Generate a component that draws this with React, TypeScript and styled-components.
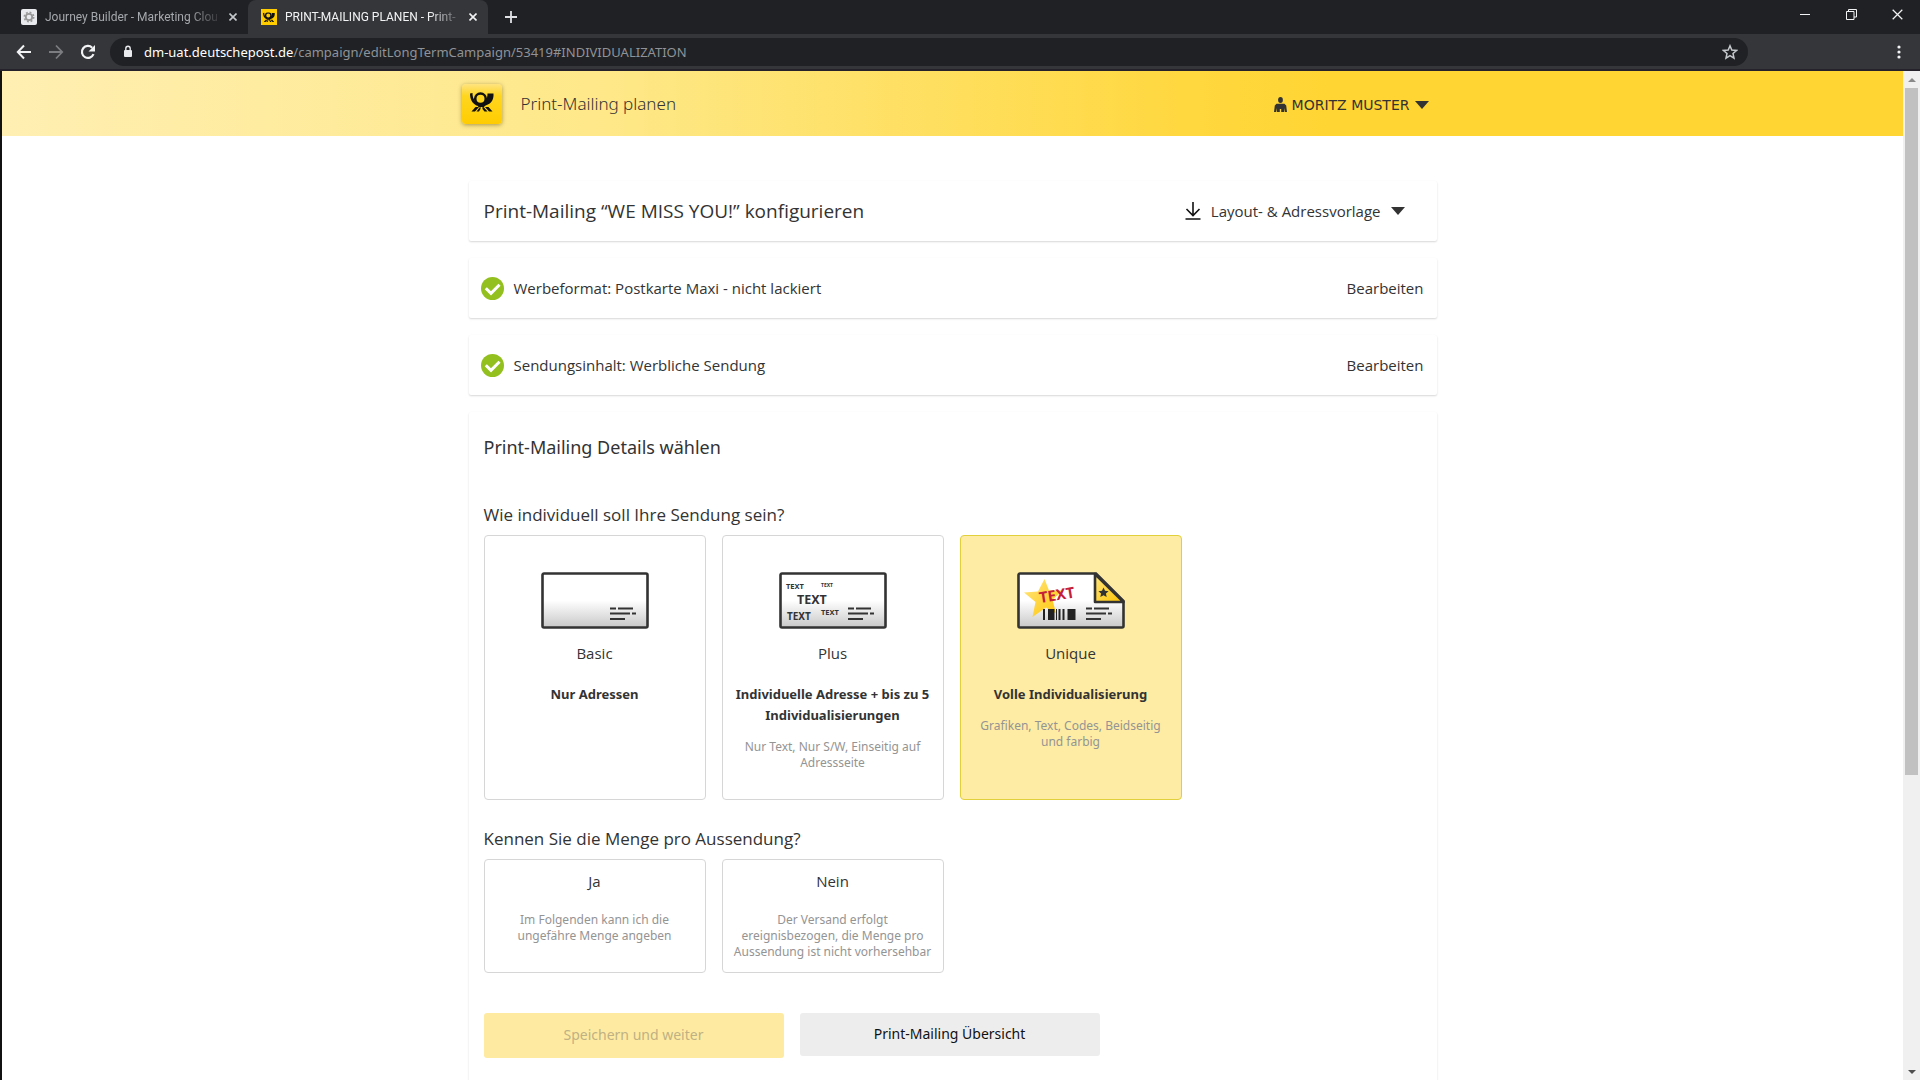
import React, { useState } from "react";
import styled, { createGlobalStyle } from "styled-components";

const sans = '"Open Sans", "Noto Sans", sans-serif';
const noto = '"Noto Sans", "Open Sans", sans-serif';
const ink = "#333333";

const GlobalStyle = createGlobalStyle`
  *, *::before, *::after { box-sizing: border-box; }
  body { margin: 0; background: #fff; color: ${ink}; font-family: ${sans}; }
  button { font-family: inherit; cursor: pointer; }
  h1, h2, h3, p { margin: 0; font-weight: 400; }
`;

const Window = styled.div`
  display: flex;
  flex-direction: column;
  height: 100vh;
  overflow: hidden;
`;

/* ---------- browser frame ---------- */

const TabStrip = styled.div`
  display: flex;
  align-items: stretch;
  height: 34px;
  flex: none;
  background: #202124;
  padding-left: 8px;
`;

const Tab = styled.div<{ $active?: boolean }>`
  display: flex;
  align-items: center;
  width: 240px;
  padding: 0 7px 0 13px;
  gap: 8px;
  border-radius: 8px 8px 0 0;
  background: ${(p) => (p.$active ? "#35363a" : "transparent")};
  color: ${(p) => (p.$active ? "#f1f3f4" : "#a5a8ad")};
  font-family: Roboto, sans-serif;
  font-size: 12px;
  line-height: 16px;
`;

const TabTitle = styled.span`
  flex: 1;
  min-width: 0;
  white-space: nowrap;
  mask-image: linear-gradient(90deg, #000 calc(100% - 28px), rgba(0, 0, 0, 0.2));
`;

const IconButton = styled.button<{ $size?: number; $color?: string }>`
  display: flex;
  align-items: center;
  justify-content: center;
  flex: none;
  width: ${(p) => p.$size ?? 16}px;
  height: ${(p) => p.$size ?? 16}px;
  padding: 0;
  border: 0;
  background: none;
  color: ${(p) => p.$color ?? "#f1f3f4"};
`;

const NewTab = styled(IconButton)`
  align-self: center;
  margin-left: 15px;
`;

const WindowControls = styled.div`
  display: flex;
  margin-left: auto;
  padding-right: 7px;
  gap: 14px;
  height: 28px;
  align-items: center;
`;

const Toolbar = styled.div`
  display: flex;
  align-items: center;
  height: 37px;
  flex: none;
  padding: 0 5px 0 8px;
  background: #35363a;
  border-bottom: 2px solid #26222b;
`;

const NavButtons = styled.div`
  display: flex;
`;

const AddressBar = styled.div`
  display: flex;
  align-items: center;
  flex: 1;
  height: 28px;
  margin: 0 135px 0 6px;
  padding: 0 10px 0 12px;
  gap: 10px;
  border-radius: 14px;
  background: #202124;
  color: #8f9398;
`;

const Url = styled.span`
  flex: 1;
  font-family: ${noto};
  font-size: 13px;
  line-height: 20px;
  white-space: nowrap;
  b { font-weight: 400; color: #fff; }
`;

const Viewport = styled.div`
  display: flex;
  flex: 1;
  min-height: 0;
  border-left: 2px solid #111;
`;

const Page = styled.div`
  flex: 1;
  min-width: 0;
  overflow: hidden;
`;

const ScrollTrack = styled.div`
  display: flex;
  flex-direction: column;
  align-items: center;
  flex: none;
  width: 17px;
  background: #f0f0f0;
`;

const ScrollArrow = styled.div`
  display: flex;
  align-items: center;
  justify-content: center;
  height: 17px;
  flex: none;
`;

const ScrollSpace = styled.div`
  flex: 1;
  align-self: stretch;
  padding: 0 2px;
`;

const ScrollThumb = styled.div`
  height: 70.5%;
  background: #c1c1c1;
`;

/* ---------- page ---------- */

const Header = styled.header`
  height: 65px;
  background: linear-gradient(90deg, #ffefb2 0%, #fee888 32%, #ffd840 62%, #ffd533 70%, #ffd533 100%);
`;

const HeaderInner = styled.div`
  display: flex;
  align-items: center;
  max-width: 982px;
  height: 100%;
  margin: 0 auto;
  padding-right: 15px;
`;

const Logo = styled.a`
  display: flex;
  align-items: center;
  justify-content: center;
  width: 40px;
  height: 40px;
  padding-bottom: 4px;
  border-radius: 4px;
  background: linear-gradient(180deg, #ffe380 0%, #ffd61f 30%, #ffcc00 100%);
  box-shadow: 0 1px 4px rgba(90, 70, 0, 0.5);
`;

const AppName = styled.span`
  margin-left: 19px;
  font-family: ${noto};
  font-size: 17px;
  line-height: 24px;
  font-weight: 300;
`;

const UserMenu = styled.button`
  display: flex;
  align-items: center;
  gap: 5px;
  margin-left: auto;
  padding: 3px 0 0;
  border: 0;
  background: none;
  color: ${ink};
  font: 14px/20px "DejaVu Sans", sans-serif;
`;

const Content = styled.main`
  display: flex;
  flex-direction: column;
  gap: 17px;
  max-width: 968px;
  margin: 0 auto;
  padding-top: 45px;
`;

const Panel = styled.section`
  border-radius: 2px;
  background: #fff;
  box-shadow: 0 1px 2px rgba(0, 0, 0, 0.16);
`;

const BarPanel = styled(Panel)<{ $inset?: boolean }>`
  display: flex;
  align-items: center;
  justify-content: space-between;
  height: 60px;
  padding: 0 ${(p) => (p.$inset ? 32 : 13)}px 0 ${(p) => (p.$inset ? 15 : 12)}px;
`;

const Title = styled.h1`
  font-size: 19px;
  line-height: 28px;
`;

const TextButton = styled.button`
  display: flex;
  align-items: center;
  gap: 10px;
  padding: 0;
  border: 0;
  background: none;
  color: ${ink};
  font-size: 15px;
  line-height: 20px;
`;

const Step = styled.h2`
  display: flex;
  align-items: center;
  gap: 10px;
  font-size: 15px;
  line-height: 20px;
`;

const DetailPanel = styled(Panel)`
  padding: 23px 15px 40px;
`;

const SectionTitle = styled.h2`
  font-family: ${noto};
  font-size: 18px;
  line-height: 24px;
`;

const Group = styled.fieldset<{ $gap: number }>`
  min-width: 0;
  margin: ${(p) => p.$gap}px 0 0;
  padding: 0;
  border: 0;
`;

const Legend = styled.legend`
  padding: 0 0 8px;
  font-size: 17px;
  line-height: 24px;
`;

const Options = styled.div`
  display: flex;
  gap: 16px;
`;

const OptionCard = styled.label<{ $selected: boolean; $tall?: boolean }>`
  position: relative;
  display: flex;
  flex-direction: column;
  align-items: center;
  flex: 0 1 222px;
  min-height: ${(p) => (p.$tall ? 265 : 114)}px;
  padding: ${(p) => (p.$tall ? 36 : 10)}px 8px 8px;
  border: 1px solid ${(p) => (p.$selected ? "#e2cf3c" : "#d6d6d6")};
  border-radius: 4px;
  background: ${(p) => (p.$selected ? "#feeca4" : "#fff")};
  text-align: center;
  cursor: pointer;
`;

const Radio = styled.input`
  position: absolute;
  inset: 0;
  margin: 0;
  opacity: 0;
  cursor: pointer;
`;

const OptionName = styled.span<{ $tall?: boolean }>`
  margin-top: ${(p) => (p.$tall ? 13 : 0)}px;
  font-size: 15px;
  line-height: 22px;
`;

const OptionLead = styled.strong`
  margin-top: 20px;
  font-family: ${noto};
  font-size: 13px;
  line-height: 21px;
  font-weight: 700;
`;

const OptionHint = styled.span<{ $gap: number }>`
  margin-top: ${(p) => p.$gap}px;
  color: #949494;
  font-family: ${noto};
  font-size: 12px;
  line-height: 16px;
`;

const Actions = styled.div`
  display: flex;
  align-items: flex-start;
  gap: 16px;
  margin-top: 40px;
`;

const ActionButton = styled.button<{ $primary?: boolean }>`
  flex: 0 1 300px;
  height: ${(p) => (p.$primary ? 45 : 43)}px;
  padding: 0 8px 1px;
  border: 0;
  border-radius: 3px;
  background: ${(p) => (p.$primary ? "#feeba1" : "#ededed")};
  color: ${(p) => (p.$primary ? "#bfb184" : "#111")};
  font-family: ${noto};
  font-size: 14px;
  line-height: 20px;
`;

/* ---------- drawings ---------- */

const Horn = ({ size }: { size: number }) => (
  <svg width={size} height={(size * 20) / 24} viewBox="0 0 24 20" aria-hidden="true">
    <circle cx="10.500" cy="6.800" r="5.300" fill="none" stroke="#111" strokeWidth="2.600" />
    <path d="M0 1.500 L2.500 1 C2.500 5.500 4 9 8.500 12 L7.500 14 C2 11.500 0 7 0 1.500Z" fill="#111" />
    <path d="M17.500 1.500 L23.500 1.500 C24 8.500 20.500 13 13 14 L10 12.500 C15.500 11 17.500 7 17.500 1.500Z" fill="#111" />
    <path d="M5.500 15 H9 L5 19.500 H1.500Z M10 15 L10.500 15 L10.500 17 L9 19.500 H6.500Z M15 15 H18.500 L22.500 19.500 H19Z M12.500 15 L13.500 15 L17.500 19.500 H14.500 L12.500 17Z M7 12.500 L16 12.500 L14 15 L8.500 15Z" fill="#111" />
  </svg>
);

const Cross = ({ size = 8, width = 1.6 }: { size?: number; width?: number }) => (
  <svg width={size} height={size} viewBox="0 0 8 8" stroke="currentColor" strokeWidth={width} aria-hidden="true">
    <path d="M.5.5l7 7M7.5.5l-7 7" />
  </svg>
);

const Caret = ({ width = 14 }: { width?: number }) => (
  <svg width={width} height="8" viewBox="0 0 14 8" fill="currentColor" aria-hidden="true">
    <path d="M0 0h14L7 8z" />
  </svg>
);

const Check = () => (
  <svg width="23" height="23" viewBox="0 0 23 23" aria-hidden="true">
    <circle cx="11.500" cy="11.500" r="11.500" fill="#93c01f" />
    <path d="M4.800 11.200l5.200 5.200 8.500-8.600" fill="none" stroke="#fff" strokeWidth="3" />
  </svg>
);

const AddressLines = () => (
  <path d="M69 36.500h6M77 36.500h15M69 41.500h20M91 41.500h4M69 47h15" stroke="#333" strokeWidth="2" />
);

type Kind = "basic" | "plus" | "unique";

const MailPiece = ({ kind }: { kind: Kind }) => (
  <svg width="108" height="57" viewBox="0 0 108 57" fontFamily="Noto Sans, sans-serif" fontWeight="700" fill={ink} aria-hidden="true">
    <defs>
      <linearGradient id={`paper-${kind}`} x1="0" y1="0" x2="0" y2="1">
        <stop offset="0.5" stopColor="#fff" />
        <stop offset="1" stopColor="#c8c8c8" />
      </linearGradient>
      <linearGradient id={`gold-${kind}`} x1="0" y1="0" x2="1" y2="1">
        <stop offset="0" stopColor="#ffe680" />
        <stop offset="1" stopColor="#ffc400" />
      </linearGradient>
    </defs>
    <path
      d={kind === "unique" ? "M3 1.500H79L106.500 29V54a1.500 1.500 0 0 1-1.500 1.500H3A1.500 1.500 0 0 1 1.500 54V3A1.500 1.500 0 0 1 3 1.500Z" : "M3 1.500H105a1.500 1.500 0 0 1 1.500 1.500V54a1.500 1.500 0 0 1-1.500 1.500H3A1.500 1.500 0 0 1 1.500 54V3A1.500 1.500 0 0 1 3 1.500Z"}
      fill={`url(#paper-${kind})`}
      stroke="#333"
      strokeWidth="2.6"
    />
    {kind === "plus" && (
      <>
        <text x="7" y="16.500" fontSize="7.500">TEXT</text>
        <text x="42" y="15" fontSize="5">TEXT</text>
        <text x="18" y="31.500" fontSize="12.500">TEXT</text>
        <text x="8" y="48" fontSize="10">TEXT</text>
        <text x="42" y="42.500" fontSize="7.500">TEXT</text>
      </>
    )}
    {kind === "unique" && (
      <>
        <path d="M27.500 7l4.500 11.500 14 0-10.500 9 3.500 14-10-6-13.500 9.500 3-15L7 20.500l14-1z" fill={`url(#gold-${kind})`} />
        <path d="M27 37v11M42.500 37v11M46.500 37v11" stroke="#222" strokeWidth="2" />
        <path d="M31 37h6.500v11H31zM39 37h1v11h-1zM50.500 37h8v11h-8z" fill="#222" />
        <text x="23" y="31" fontSize="15" fill="#c4203a" transform="rotate(-9 23 31)">TEXT</text>
        <path d="M78 2V30H106.500Z" fill={`url(#gold-${kind})`} stroke="#333" strokeWidth="2.600" strokeLinejoin="round" />
        <path d="M86.500 15.500l1.500 3.300 3.600.4-2.700 2.400.8 3.500-3.200-1.800-3.200 1.800.8-3.500-2.700-2.400 3.600-.4z" />
      </>
    )}
    <AddressLines />
  </svg>
);

const individualOptions: { kind: Kind; name: string; lead: string; hint?: string }[] = [
  { kind: "basic", name: "Basic", lead: "Nur Adressen" },
  { kind: "plus", name: "Plus", lead: "Individuelle Adresse + bis zu 5 Individualisierungen", hint: "Nur Text, Nur S/W, Einseitig auf Adressseite" },
  { kind: "unique", name: "Unique", lead: "Volle Individualisierung", hint: "Grafiken, Text, Codes, Beidseitig und farbig" },
];

const amountOptions = [
  { name: "Ja", hint: "Im Folgenden kann ich die ungefähre Menge angeben" },
  { name: "Nein", hint: "Der Versand erfolgt ereignisbezogen, die Menge pro Aussendung ist nicht vorhersehbar" },
];

const steps = ["Werbeformat: Postkarte Maxi - nicht lackiert", "Sendungsinhalt: Werbliche Sendung"];

function BrowserFrame() {
  return (
    <>
      <TabStrip>
        <Tab>
          <svg width="16" height="16" viewBox="0 0 16 16" aria-hidden="true">
            <rect width="16" height="16" rx="2" fill="#e8eaed" />
            <circle cx="8" cy="8" r="3.200" fill="none" stroke="#999" strokeWidth="1.800" />
            <circle cx="8" cy="8" r="4.700" fill="none" stroke="#999" strokeWidth="1.600" strokeDasharray="1.850 1.840" />
          </svg>
          <TabTitle>Journey Builder - Marketing Clou</TabTitle>
          <IconButton aria-label="Tab schließen" $color="#c5c8cc"><Cross /></IconButton>
        </Tab>
        <Tab $active>
          <svg width="16" height="16" viewBox="0 0 16 16" aria-hidden="true">
            <rect width="16" height="16" fill="#ffcc00" />
            <g transform="translate(2 3.200)"><Horn size={12} /></g>
          </svg>
          <TabTitle>PRINT-MAILING PLANEN - Print-</TabTitle>
          <IconButton aria-label="Tab schließen"><Cross /></IconButton>
        </Tab>
        <NewTab aria-label="Neuer Tab">
          <svg width="12" height="12" viewBox="0 0 12 12" stroke="#dfe1e5" strokeWidth="1.800" aria-hidden="true"><path d="M6 0v12M0 6h12" /></svg>
        </NewTab>
        <WindowControls>
          <IconButton $size={32} aria-label="Minimieren">
            <svg width="10" height="10" viewBox="0 0 10 10" stroke="currentColor" aria-hidden="true"><path d="M0 5.500h10" /></svg>
          </IconButton>
          <IconButton $size={32} aria-label="Verkleinern">
            <svg width="11" height="11" viewBox="0 0 11 11" fill="none" stroke="currentColor" aria-hidden="true"><path d="M.5 2.500h7.500v8H.5zM2.500 2.500V.5h8v7.500H8" /></svg>
          </IconButton>
          <IconButton $size={32} aria-label="Schließen"><Cross size={11} width={0.9} /></IconButton>
        </WindowControls>
      </TabStrip>
      <Toolbar>
        <NavButtons>
          <IconButton $size={32} aria-label="Zurück">
            <svg width="16" height="16" viewBox="0 0 16 16" fill="none" stroke="currentColor" strokeWidth="2" aria-hidden="true"><path d="M15 8H2M8 1.500L1.800 8 8 14.500" /></svg>
          </IconButton>
          <IconButton $size={32} $color="#7b7d81" aria-label="Vorwärts">
            <svg width="16" height="16" viewBox="0 0 16 16" fill="none" stroke="currentColor" strokeWidth="1.800" aria-hidden="true"><path d="M1 8h13M8 1.500L14.200 8 8 14.500" /></svg>
          </IconButton>
          <IconButton $size={32} aria-label="Neu laden">
            <svg width="16" height="16" viewBox="0 0 16 16" aria-hidden="true">
              <path d="M13.500 10.200A6 6 0 1 1 12.200 3.700" fill="none" stroke="currentColor" strokeWidth="2.200" />
              <path d="M15 1v6.500H8.500z" fill="currentColor" />
            </svg>
          </IconButton>
        </NavButtons>
        <AddressBar>
          <svg width="12" height="14" viewBox="0 0 12 14" aria-hidden="true">
            <rect x="2" y="5" width="8" height="7" rx="1" fill="#e8eaed" />
            <path d="M3.800 6V3.500a2.200 2.200 0 0 1 4.400 0V6" fill="none" stroke="#e8eaed" strokeWidth="1.400" />
          </svg>
          <Url><b>dm-uat.deutschepost.de</b>/campaign/editLongTermCampaign/53419#INDIVIDUALIZATION</Url>
          <IconButton aria-label="Lesezeichen" $color="#c5c8cc">
            <svg width="16" height="16" viewBox="0 0 16 16" fill="none" stroke="currentColor" strokeWidth="1.500" aria-hidden="true"><path d="M8 1.800l1.800 4.300 4.700.4-3.500 3 1 4.600L8 11.700l-4 2.400 1-4.600-3.500-3 4.700-.4z" /></svg>
          </IconButton>
        </AddressBar>
        <IconButton $size={32} aria-label="Menü">
          <svg width="4" height="14" viewBox="0 0 4 14" fill="currentColor" aria-hidden="true"><circle cx="2" cy="2" r="1.600" /><circle cx="2" cy="7" r="1.600" /><circle cx="2" cy="12" r="1.600" /></svg>
        </IconButton>
      </Toolbar>
    </>
  );
}

export default function App() {
  const [kind, setKind] = useState<Kind>("unique");
  const [amount, setAmount] = useState("");

  return (
    <Window>
      <GlobalStyle />
      <BrowserFrame />
      <Viewport>
        <Page>
          <Header>
            <HeaderInner>
              <Logo href="#" aria-label="Deutsche Post"><Horn size={24} /></Logo>
              <AppName>Print-Mailing planen</AppName>
              <UserMenu>
                <svg width="13" height="16" viewBox="0 0 13 16" fill="currentColor" aria-hidden="true">
                  <ellipse cx="6.500" cy="3" rx="2.400" ry="3" />
                  <path d="M2.500 6.800h8l1.700 1.700L13 15h-2.200L10 11v4H7.200v-3H5.800v3H3v-4l-.8 4H0L.8 8.500z" />
                </svg>
                MORITZ MUSTER
                <Caret />
              </UserMenu>
            </HeaderInner>
          </Header>
          <Content>
            <BarPanel $inset>
              <Title>Print-Mailing “WE MISS YOU!” konfigurieren</Title>
              <TextButton>
                <svg width="16" height="18" viewBox="0 0 16 18" fill="none" stroke="#111" strokeWidth="1.600" aria-hidden="true"><path d="M8 0v13M1.500 7L8 13.500 14.500 7M.5 17h15" /></svg>
                Layout- &amp; Adressvorlage
                <Caret />
              </TextButton>
            </BarPanel>
            {steps.map((s) => (
              <BarPanel key={s}>
                <Step><Check />{s}</Step>
                <TextButton>Bearbeiten</TextButton>
              </BarPanel>
            ))}
            <DetailPanel>
              <SectionTitle>Print-Mailing Details wählen</SectionTitle>
              <Group $gap={44}>
                <Legend>Wie individuell soll Ihre Sendung sein?</Legend>
                <Options>
                  {individualOptions.map((o) => (
                    <OptionCard key={o.kind} $tall $selected={kind === o.kind}>
                      <Radio type="radio" name="kind" checked={kind === o.kind} onChange={() => setKind(o.kind)} />
                      <MailPiece kind={o.kind} />
                      <OptionName $tall>{o.name}</OptionName>
                      <OptionLead>{o.lead}</OptionLead>
                      {o.hint && <OptionHint $gap={13}>{o.hint}</OptionHint>}
                    </OptionCard>
                  ))}
                </Options>
              </Group>
              <Group $gap={27}>
                <Legend>Kennen Sie die Menge pro Aussendung?</Legend>
                <Options>
                  {amountOptions.map((o) => (
                    <OptionCard key={o.name} $selected={amount === o.name}>
                      <Radio type="radio" name="amount" checked={amount === o.name} onChange={() => setAmount(o.name)} />
                      <OptionName>{o.name}</OptionName>
                      <OptionHint $gap={20}>{o.hint}</OptionHint>
                    </OptionCard>
                  ))}
                </Options>
              </Group>
              <Actions>
                <ActionButton $primary disabled>Speichern und weiter</ActionButton>
                <ActionButton>Print-Mailing Übersicht</ActionButton>
              </Actions>
            </DetailPanel>
          </Content>
        </Page>
        <ScrollTrack>
          <ScrollArrow><svg width="8" height="4" viewBox="0 0 8 4" fill="#8a8a8a" aria-hidden="true"><path d="M0 4h8L4 0z" /></svg></ScrollArrow>
          <ScrollSpace><ScrollThumb /></ScrollSpace>
          <ScrollArrow><svg width="8" height="4" viewBox="0 0 8 4" fill="#505050" aria-hidden="true"><path d="M0 0h8L4 4z" /></svg></ScrollArrow>
        </ScrollTrack>
      </Viewport>
    </Window>
  );
}
